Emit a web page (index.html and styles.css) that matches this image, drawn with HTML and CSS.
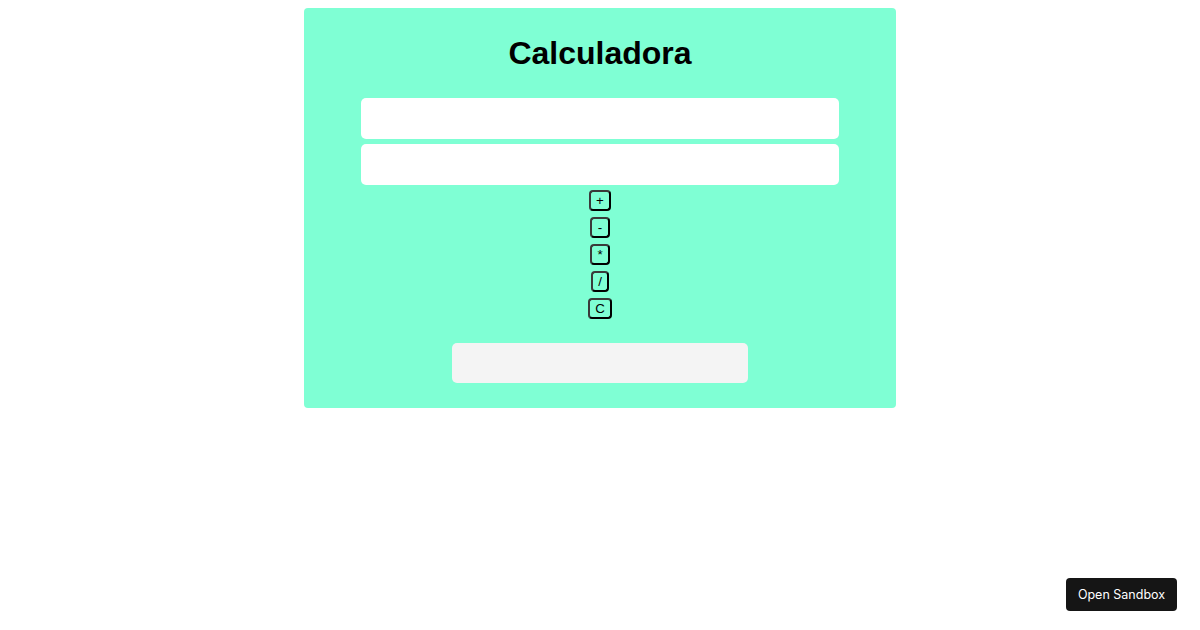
FILE: index.html
```html
<!DOCTYPE html>
<html lang="es">
<head>
<meta charset="utf-8">
<title>Calculadora</title>
<link rel="stylesheet" href="styles.css">
</head>
<body>
<div class="calc">
  <h1 class="title">Calculadora</h1>
  <input class="field" type="text">
  <input class="field" type="text">
  <div class="ops">
    <button class="op">+</button>
    <button class="op">-</button>
    <button class="op">*</button>
    <button class="op">/</button>
    <button class="op">C</button>
  </div>
  <div class="result"></div>
</div>
<button class="sandbox">Open Sandbox</button>
</body>
</html>
```
FILE: styles.css
```css
body {
  margin: 8px;
  background: #ffffff;
  font-family: "Liberation Sans", Arial, sans-serif;
}
.calc {
  width: 592px;
  margin: 0 auto;
  box-sizing: border-box;
  background: #7fffd4;
  border-radius: 4px;
  padding: 27px 0 25px;
  display: flex;
  flex-direction: column;
  align-items: center;
}
.title {
  margin: 0 0 26px;
  font-size: 32px;
  font-weight: bold;
  color: #000;
  line-height: 37px;
}
.field {
  display: block;
  width: 478px;
  height: 41px;
  box-sizing: border-box;
  border: none;
  border-radius: 5px;
  background: #fff;
  margin: 0 0 5px;
  padding: 0 10px;
  outline: none;
}
.ops {
  display: flex;
  flex-direction: column;
  align-items: center;
  gap: 5.6px;
}
.op {
  font-family: "Liberation Sans", Arial, sans-serif;
  font-size: 13.33px;
  line-height: 15px;
  height: 21.33px;
  box-sizing: border-box;
  padding: 1px 5.5px;
  border: 2px outset #3a3a3a;
  border-radius: 4px;
  background: transparent;
  color: #000;
}
.result {
  margin-top: 24px;
  width: 296px;
  height: 40px;
  background: #f4f4f4;
  border-radius: 5px;
}
.sandbox {
  position: fixed;
  right: 23px;
  bottom: 19px;
  width: 111px;
  height: 33px;
  background: #151515;
  color: #fff;
  border: none;
  border-radius: 4px;
  font-family: Inter, "Liberation Sans", sans-serif;
  font-size: 12.5px;
}
```
